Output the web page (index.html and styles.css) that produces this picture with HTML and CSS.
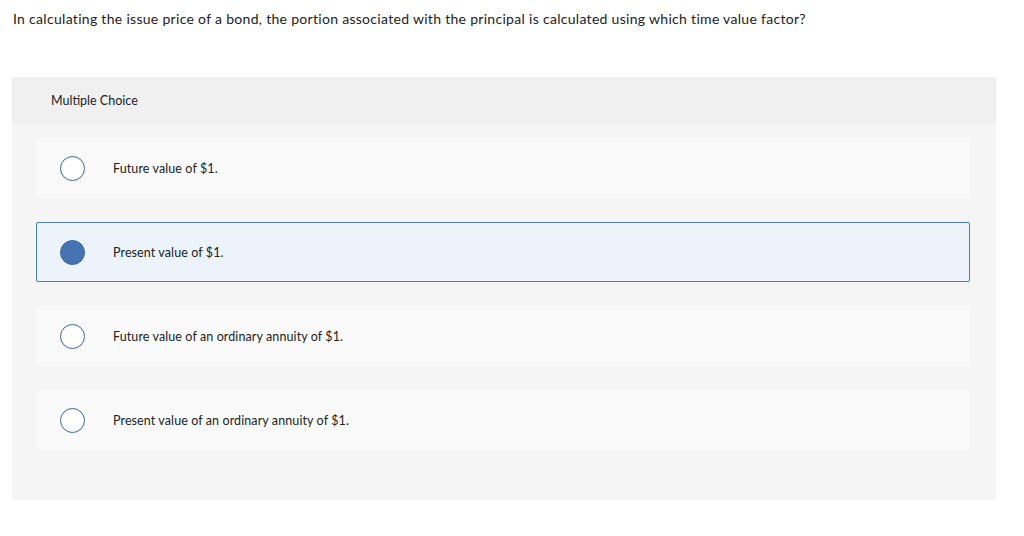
FILE: index.html
```html
<!DOCTYPE html>
<html>
<head>
<meta charset="utf-8">
<link rel="stylesheet" href="styles.css">
</head>
<body>
<p class="question">In calculating the issue price of a bond, the portion associated with the principal is calculated using which time value factor?</p>
<div class="panel">
  <div class="panel-head">Multiple Choice</div>
  <div class="panel-body">
    <div class="option"><span class="radio"></span><span class="label">Future value of $1.</span></div>
    <div class="option selected"><span class="radio"></span><span class="label">Present value of $1.</span></div>
    <div class="option"><span class="radio"></span><span class="label">Future value of an ordinary annuity of $1.</span></div>
    <div class="option"><span class="radio"></span><span class="label">Present value of an ordinary annuity of $1.</span></div>
  </div>
</div>
</body>
</html>
```
FILE: styles.css
```css
html, body { margin: 0; padding: 0; background: #fff; }
body {
  font-family: Lato, "Open Sans", sans-serif;
  color: #222;
  padding: 0 28px 0 12px;
}
.question {
  margin: 0;
  padding: 10px 0 0 1px;
  font-size: 14px;
  letter-spacing: 0.3px;
  line-height: 18px;
  height: 67px;
}
.panel {
  background: #f5f5f5;
  border-radius: 2px;
  padding-bottom: 50px;
}
.panel-head {
  background: #f0f0f0;
  height: 46px;
  display: flex;
  align-items: center;
  padding-left: 39px;
  font-size: 12.5px;
  border-radius: 2px 2px 0 0;
}
.panel-body {
  padding: 15px 26px 0 24px;
  display: flex;
  flex-direction: column;
  gap: 24px;
}
.option {
  height: 60px;
  box-sizing: border-box;
  background: #fafafa;
  border-radius: 2px;
  display: flex;
  align-items: center;
  padding-left: 23px;
  border: 1px solid transparent;
}
.option.selected {
  background: #ecf3fb;
  border-color: #4a7cc0;
}
.radio {
  width: 25px;
  height: 25px;
  box-sizing: border-box;
  border: 1px solid #3a659c;
  border-radius: 50%;
  background: #fff;
  flex: none;
}
.selected .radio {
  background: #4674b2;
  border-color: #3a659c;
}
.label {
  margin-left: 28px;
  font-size: 12.5px;
  letter-spacing: 0.1px;
}
```
